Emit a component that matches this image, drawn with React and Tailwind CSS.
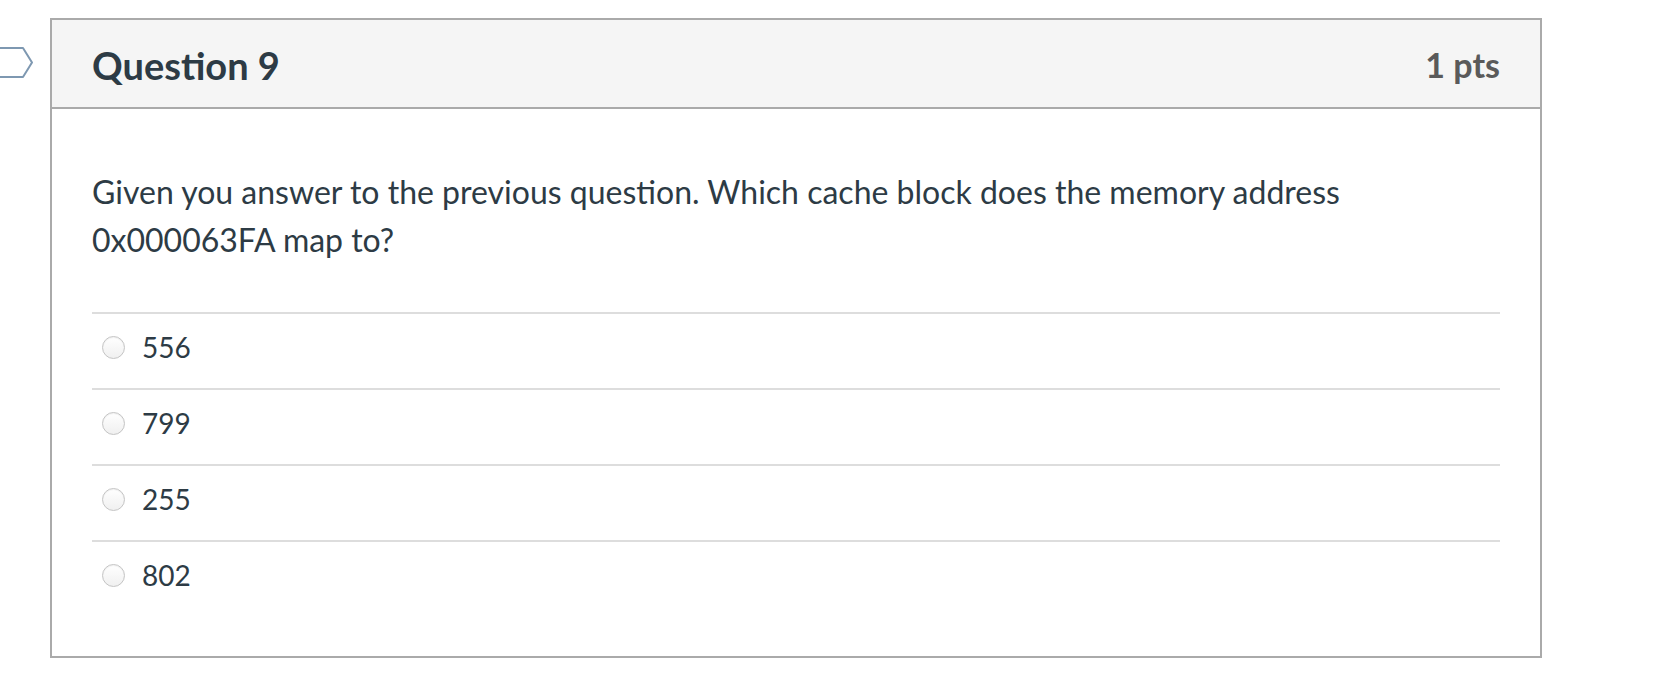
import React from "react";

const options = ["556", "799", "255", "802"];

function Radio() {
  return (
    <span className="ml-[10px] inline-block h-[23px] w-[23px] shrink-0 rounded-full border border-[#c4c4c4] bg-gradient-to-b from-[#ffffff] to-[#f0f0f0] shadow-[inset_0_1px_1px_rgba(0,0,0,0.06)]" />
  );
}

export default function App() {
  return (
    <div className="min-h-[700px] bg-white pt-[18px] font-['Lato','Open_Sans',sans-serif]">
      <div className="flex items-start">
        <div className="w-[50px] shrink-0 pt-[29px]">
          <svg width="50" height="32" viewBox="0 0 50 32" fill="none">
            <path d="M-4 1 H23 L32 15.5 L23 30 H-4" fill="#ffffff" stroke="#7e98b1" strokeWidth="2" strokeLinejoin="round" />
          </svg>
        </div>
        <div className="flex h-[640px] w-[1492px] flex-col border-2 border-[#aaaaaa]">
          <div className="flex h-[89px] items-center justify-between border-b-2 border-[#aaaaaa] bg-[#f5f5f5] px-[40px] pt-[2px]">
            <h2 className="text-[38px] font-bold leading-none text-[#2d3b45]">Question 9</h2>
            <span className="text-[34px] font-bold leading-none text-[#5a5a5a]">1 pts</span>
          </div>
          <div className="flex-1 px-[40px] pt-[59px]">
            <p className="text-[32px] leading-[48px] text-[#2d3b45]">
              Given you answer to the previous question. Which cache block does the memory address 0x000063FA map to?
            </p>
            <div className="mt-[48px]">
              {options.map((o) => (
                <div key={o} className="flex h-[76px] items-center border-t-2 border-[#dddddd] pb-[8px]">
                  <Radio />
                  <span className="ml-[17px] text-[28px] leading-[48px] text-[#2d3b45]">{o}</span>
                </div>
              ))}
            </div>
          </div>
        </div>
      </div>
    </div>
  );
}
